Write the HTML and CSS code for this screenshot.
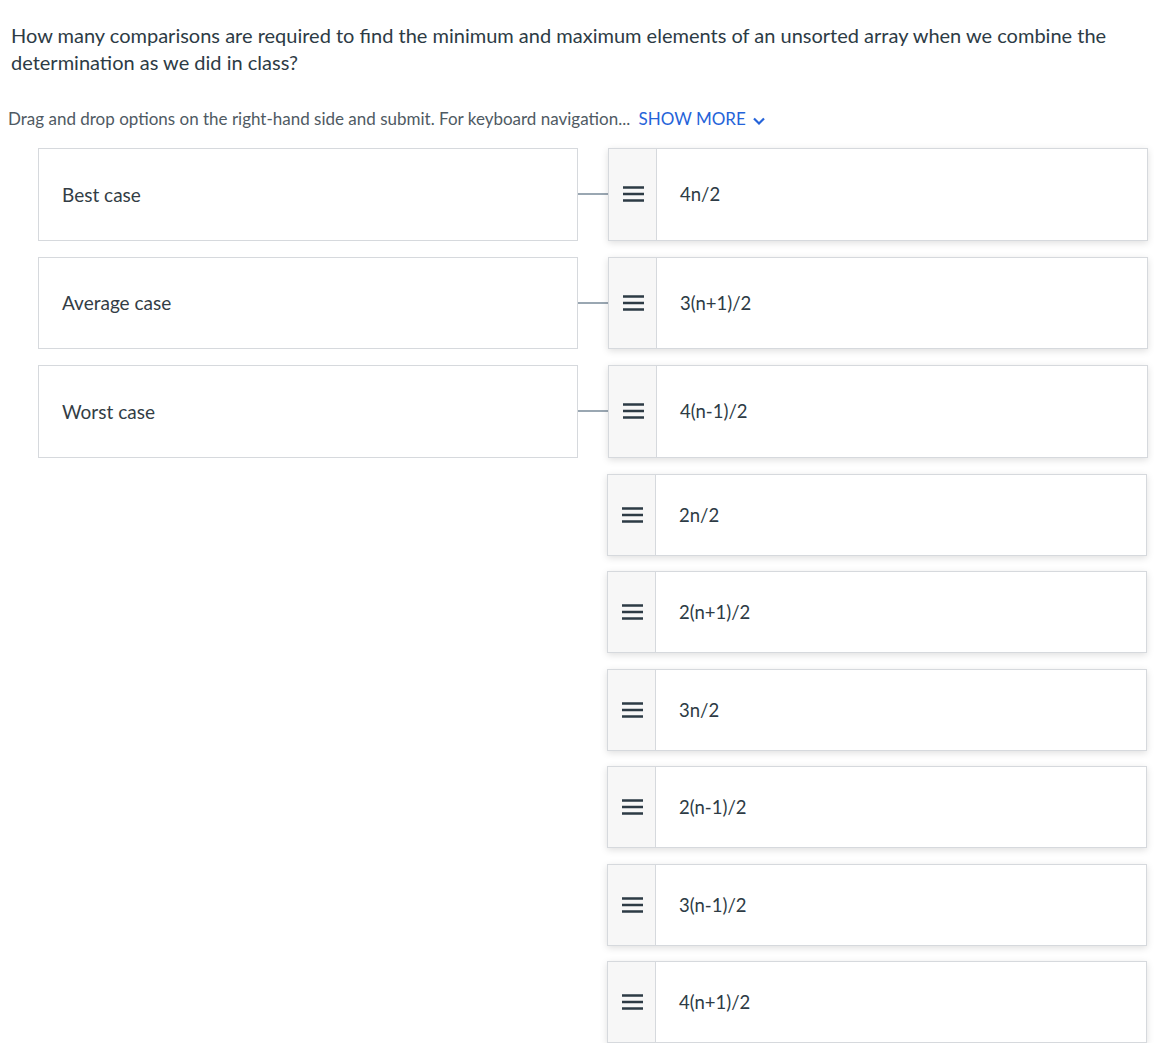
FILE: index.html
```html
<!DOCTYPE html>
<html lang="en">
<head>
  <meta charset="UTF-8" />
  <title>Matching question</title>
  <link rel="stylesheet" href="styles.css">
</head>
<body>
  <div class="question">
    How many comparisons are required to find the minimum and maximum elements of an unsorted array when we combine the determination as we did in class?
  </div>

  <div class="hint">
    Drag and drop options on the right-hand side and submit. For keyboard navigation...
    <span class="show-more">SHOW MORE
      <svg width="14" height="10" viewBox="0 0 14 10"><path d="M2 2.5 L7 7.5 L12 2.5" fill="none" stroke="#2563d9" stroke-width="2.2"/></svg>
    </span>
  </div>

  <div class="board">
    <div class="pair">
      <div class="target">Best case</div>
      <div class="link"></div>
      <div class="card tall">
        <div class="handle"><svg class="grip" width="21" height="16" viewBox="0 0 21 16"><path d="M0 1.5H21M0 8H21M0 14.5H21" stroke="#2d3b45" stroke-width="2.4"/></svg></div>
        <div class="label">4n/2</div>
      </div>
    </div>
    <div class="pair">
      <div class="target">Average case</div>
      <div class="link"></div>
      <div class="card tall">
        <div class="handle"><svg class="grip" width="21" height="16" viewBox="0 0 21 16"><path d="M0 1.5H21M0 8H21M0 14.5H21" stroke="#2d3b45" stroke-width="2.4"/></svg></div>
        <div class="label">3(n+1)/2</div>
      </div>
    </div>
    <div class="pair">
      <div class="target">Worst case</div>
      <div class="link"></div>
      <div class="card tall">
        <div class="handle"><svg class="grip" width="21" height="16" viewBox="0 0 21 16"><path d="M0 1.5H21M0 8H21M0 14.5H21" stroke="#2d3b45" stroke-width="2.4"/></svg></div>
        <div class="label">4(n-1)/2</div>
      </div>
    </div>

    <div class="pool">
      <div class="card">
        <div class="handle"><svg class="grip" width="21" height="16" viewBox="0 0 21 16"><path d="M0 1.5H21M0 8H21M0 14.5H21" stroke="#2d3b45" stroke-width="2.4"/></svg></div>
        <div class="label">2n/2</div>
      </div>
      <div class="card">
        <div class="handle"><svg class="grip" width="21" height="16" viewBox="0 0 21 16"><path d="M0 1.5H21M0 8H21M0 14.5H21" stroke="#2d3b45" stroke-width="2.4"/></svg></div>
        <div class="label">2(n+1)/2</div>
      </div>
      <div class="card">
        <div class="handle"><svg class="grip" width="21" height="16" viewBox="0 0 21 16"><path d="M0 1.5H21M0 8H21M0 14.5H21" stroke="#2d3b45" stroke-width="2.4"/></svg></div>
        <div class="label">3n/2</div>
      </div>
      <div class="card">
        <div class="handle"><svg class="grip" width="21" height="16" viewBox="0 0 21 16"><path d="M0 1.5H21M0 8H21M0 14.5H21" stroke="#2d3b45" stroke-width="2.4"/></svg></div>
        <div class="label">2(n-1)/2</div>
      </div>
      <div class="card">
        <div class="handle"><svg class="grip" width="21" height="16" viewBox="0 0 21 16"><path d="M0 1.5H21M0 8H21M0 14.5H21" stroke="#2d3b45" stroke-width="2.4"/></svg></div>
        <div class="label">3(n-1)/2</div>
      </div>
      <div class="card">
        <div class="handle"><svg class="grip" width="21" height="16" viewBox="0 0 21 16"><path d="M0 1.5H21M0 8H21M0 14.5H21" stroke="#2d3b45" stroke-width="2.4"/></svg></div>
        <div class="label">4(n+1)/2</div>
      </div>
    </div>
  </div>
</body>
</html>
```

FILE: styles.css
```css
body {
  margin: 8px;
  font-family: 'Lato', 'Noto Sans', sans-serif;
  color: #2d3b45;
  background: #fff;
}
.question {
  margin: 14px 0 0 3px;
  max-width: 1110px;
  font-size: 20px;
  line-height: 27px;
}
.hint {
  margin-top: 31px;
  font-size: 17px;
  line-height: 24px;
  color: #4f5a63;
}
.show-more {
  margin-left: 4px;
  color: #2563d9;
}
.show-more svg {
  margin-left: 2px;
  vertical-align: middle;
}
.board {
  margin-top: 17px;
  padding-left: 30px;
  display: flex;
  flex-direction: column;
  gap: 16px;
}
.pair {
  display: flex;
  align-items: center;
}
.target {
  box-sizing: border-box;
  width: 540px;
  height: 92.5px;
  border: 1px solid #d6d9dd;
  padding-left: 23px;
  display: flex;
  align-items: center;
  font-size: 19px;
  color: #333d45;
}
.link {
  width: 30px;
  height: 2px;
  background: #9aa7b2;
}
.card {
  box-sizing: border-box;
  width: 540px;
  height: 82px;
  display: flex;
  background: #fff;
  border: 1px solid #d6d9dd;
  box-shadow: 0 2px 7px rgba(0, 0, 0, 0.13);
}
.card.tall {
  height: 92.5px;
}
.handle {
  width: 47px;
  background: #f7f7f7;
  border-right: 1px solid #d6d9dd;
  display: flex;
  align-items: center;
  justify-content: center;
}
.grip {
  margin-left: 1px;
}
.label {
  padding-left: 23px;
  display: flex;
  align-items: center;
  font-size: 18.5px;
  color: #2d3b45;
}
.pool {
  margin-left: 569px;
  display: flex;
  flex-direction: column;
  gap: 15.6px;
}
```
